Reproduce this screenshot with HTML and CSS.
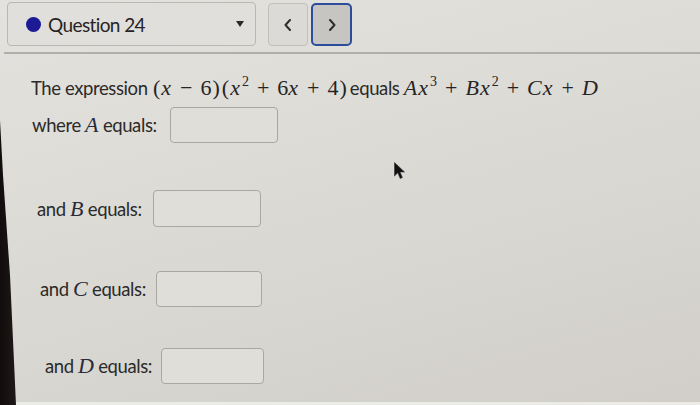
FILE: index.html
```html
<!DOCTYPE html>
<html lang="en">
<head>
<meta charset="utf-8">
<title>Question 24</title>
<link rel="stylesheet" href="styles.css">
</head>
<body>
<div class="page">
  <header class="topbar">
    <div class="qselect">
      <span class="dot"></span>
      <span class="qlabel">Question 24</span>
      <span class="caret"></span>
    </div>
    <div class="nav">
      <button class="navbtn" aria-label="Previous">
        <svg width="10" height="12" viewBox="0 0 10 12"><polyline points="7,1 2.5,6 7,11" fill="none" stroke="#2e2e30" stroke-width="2" stroke-linecap="round" stroke-linejoin="round"/></svg>
      </button>
      <button class="navbtn active" aria-label="Next">
        <svg width="10" height="12" viewBox="0 0 10 12"><polyline points="3,1 7.5,6 3,11" fill="none" stroke="#2e2e30" stroke-width="2" stroke-linecap="round" stroke-linejoin="round"/></svg>
      </button>
    </div>
  </header>
  <div class="rule"></div>
  <main class="question">
    <p class="stem">The expression <span class="math"><span class="mo">(</span><i>x</i><span class="op">−</span>6<span class="mo">)</span><span class="mo">(</span><i>x</i><sup>2</sup><span class="op">+</span>6<i>x</i><span class="op">+</span>4<span class="mo">)</span></span><span class="txt">equals</span> <span class="math"><i>A</i><i>x</i><sup>3</sup><span class="op">+</span><i>B</i><i>x</i><sup>2</sup><span class="op">+</span><i>C</i><i>x</i><span class="op">+</span><i>D</i></span></p>
    <div class="row row-a"><span class="label">where <i class="var">A</i> equals:</span><span class="box"></span></div>
    <div class="row row-b"><span class="label">and <i class="var">B</i> equals:</span><span class="box"></span></div>
    <div class="row row-c"><span class="label">and <i class="var">C</i> equals:</span><span class="box"></span></div>
    <div class="row row-d"><span class="label">and <i class="var">D</i> equals:</span><span class="box"></span></div>
  </main>
  <div class="bottom-strip"></div>
  <div class="edge"></div>
  <svg class="cursor" width="12" height="18" viewBox="0 0 12 18"><path d="M0.5 0.5 L0.5 14 L3.8 10.8 L6.2 16.5 L8.4 15.6 L6 10 L10.5 10 Z" fill="#111" stroke="#333" stroke-width="0.6"/></svg>
</div>
</body>
</html>
```
FILE: styles.css
```css
html, body {
  margin: 0;
  padding: 0;
}
body {
  width: 700px;
  height: 405px;
  overflow: hidden;
  font-family: "Lato", "Open Sans", sans-serif;
  color: #2b2a2a;
}
.page {
  position: relative;
  width: 700px;
  height: 405px;
  background: linear-gradient(165deg, #e4e2de 0%, #dddbd6 40%, #d6d4ce 75%, #d0cec7 100%);
  overflow: hidden;
}
.topbar {
  display: flex;
  align-items: flex-start;
  padding: 2px 0 0 7px;
  height: 46px;
  box-sizing: border-box;
}
.qselect {
  display: flex;
  align-items: center;
  width: 249px;
  height: 44px;
  box-sizing: border-box;
  border: 1px solid #bab8b3;
  border-radius: 4px;
  background: #e0dfdb;
  padding: 0 11px 0 18px;
}
.dot {
  width: 15px;
  height: 15px;
  border-radius: 50%;
  background: #1c1a95;
  flex: none;
}
.qlabel {
  margin-left: 7px;
  font-size: 19px;
  letter-spacing: -0.6px;
  color: #262424;
  flex: 1;
}
.caret {
  width: 0;
  height: 0;
  border-left: 4px solid transparent;
  border-right: 4px solid transparent;
  border-top: 6px solid #2a2828;
}
.nav {
  display: flex;
  gap: 3px;
  margin-left: 12px;
  padding-top: 1px;
}
.navbtn {
  width: 40px;
  height: 43px;
  box-sizing: border-box;
  border: 1px solid #c2c0bb;
  border-radius: 4px;
  background: #dcdad6;
  display: flex;
  align-items: center;
  justify-content: center;
  padding: 0;
}
.navbtn.active {
  width: 41px;
  border: 2px solid #2c4d9c;
  border-radius: 5px;
  background: #c6c5c2;
}
.rule {
  margin: 6px 0 0 4px;
  height: 0;
  border-top: 2px solid #b1afaa;
}
.question {
  padding: 0;
}
.stem {
  margin: 19px 0 0 31px;
  font-size: 18.5px;
  letter-spacing: -0.4px;
  line-height: 30px;
  white-space: nowrap;
}
.math {
  font-family: "Liberation Serif", "DejaVu Serif", serif;
  font-size: 22px;
  letter-spacing: 0;
  color: #262424;
}
.math i, .var {
  font-family: "Liberation Serif", "DejaVu Serif", serif;
  font-style: italic;
  letter-spacing: 0;
}
.math i {
  padding-right: 1px;
}
.math sup {
  font-size: 14px;
  vertical-align: 0;
  position: relative;
  top: -9px;
  line-height: 0;
  margin-left: 1px;
}
.mo {
  padding: 0 1px;
}
.op {
  padding: 0 8px;
}
.txt {
  margin-left: 2px;
}
.row {
  display: flex;
  align-items: center;
  font-size: 18.5px;
  letter-spacing: -0.4px;
}
.var {
  font-size: 22px;
  color: #2a2a3a;
}
.box {
  display: block;
  height: 36px;
  box-sizing: border-box;
  border: 1px solid #a9a7a2;
  border-radius: 4px;
  background: #dfded9;
}
.row-a { margin: 4px 0 0 32px; gap: 13px; }
.row-a .box { width: 108px; }
.row-b { margin: 47px 0 0 37px; gap: 11px; }
.row-b .box { width: 108px; height: 37px; }
.row-c { margin: 44px 0 0 40px; gap: 10px; }
.row-c .box { width: 106px; }
.row-d { margin: 41px 0 0 45px; gap: 9px; }
.row-d .box { width: 103px; }
.bottom-strip {
  position: absolute;
  left: 0;
  right: 0;
  bottom: 0;
  height: 3px;
  background: #ebebe8;
}
.edge {
  position: absolute;
  left: 0;
  top: 0;
  width: 30px;
  height: 405px;
  background: linear-gradient(90deg, #120d0d, #2a2222);
  clip-path: polygon(0 120px, 3px 175px, 10px 275px, 16px 405px, 0 405px);
}
.cursor {
  position: absolute;
  left: 394px;
  top: 162px;
}
```
